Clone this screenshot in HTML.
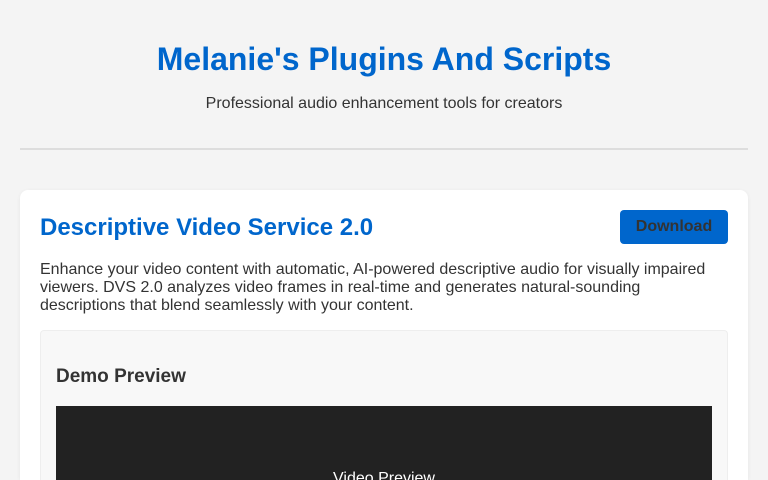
<!DOCTYPE html>
<html style="overflow:hidden;height:480px"><head><style>
body{margin:0;background:#f4f4f4;font-family:"Liberation Sans",Arial,sans-serif;color:#333;overflow:hidden;width:768px;height:480px;position:relative}
.hdr{text-align:center;position:absolute;left:20px;right:20px;top:0;height:150px;border-bottom:2px solid #ddd;box-sizing:border-box}
h1{position:absolute;left:0;right:0;top:40px;margin:0;font-size:32px;line-height:38px;color:#0066cc}
.sub{position:absolute;left:0;right:0;top:95px;font-size:16px;line-height:18px}
.card{position:absolute;left:20px;top:190px;width:728px;height:290px;background:#fff;border-radius:8px 8px 0 0;box-shadow:0 1px 4px rgba(0,0,0,.06);overflow:hidden}
.t{position:absolute;left:20px;top:24px;font-size:24px;line-height:28px;font-weight:bold;color:#0066cc;margin:0}
.btn{position:absolute;left:600px;top:20px;width:108px;height:34px;background:#0066cc;border-radius:4px;color:#333;font-weight:bold;font-size:16px;line-height:34px;text-align:center}
.p{position:absolute;left:20px;top:71px;width:680px;font-size:16px;line-height:18px}
.demo{position:absolute;left:20px;top:140px;width:686px;height:149px;background:#f8f8f8;border:1px solid #eee;border-bottom:0;border-radius:4px 4px 0 0;overflow:hidden}
.dt{position:absolute;left:15px;top:35px;font-size:19px;font-weight:bold;line-height:22px}
.vid{position:absolute;left:15px;top:75px;width:656px;height:74px;background:#222;color:#fff;text-align:center;font-size:16px;overflow:hidden}
.vid span{position:absolute;left:0;right:0;top:64px;line-height:18px}
</style></head><body>
<div class="hdr"><h1>Melanie's Plugins And Scripts</h1><div class="sub">Professional audio enhancement tools for creators</div></div>
<div class="card">
<div class="t">Descriptive Video Service 2.0</div>
<div class="btn">Download</div>
<div class="p">Enhance your video content with automatic, AI-powered descriptive audio for visually impaired viewers. DVS 2.0 analyzes video frames in real-time and generates natural-sounding descriptions that blend seamlessly with your content.</div>
<div class="demo"><div class="dt">Demo Preview</div><div class="vid"><span>Video Preview</span></div></div>
</div>
</body></html>
